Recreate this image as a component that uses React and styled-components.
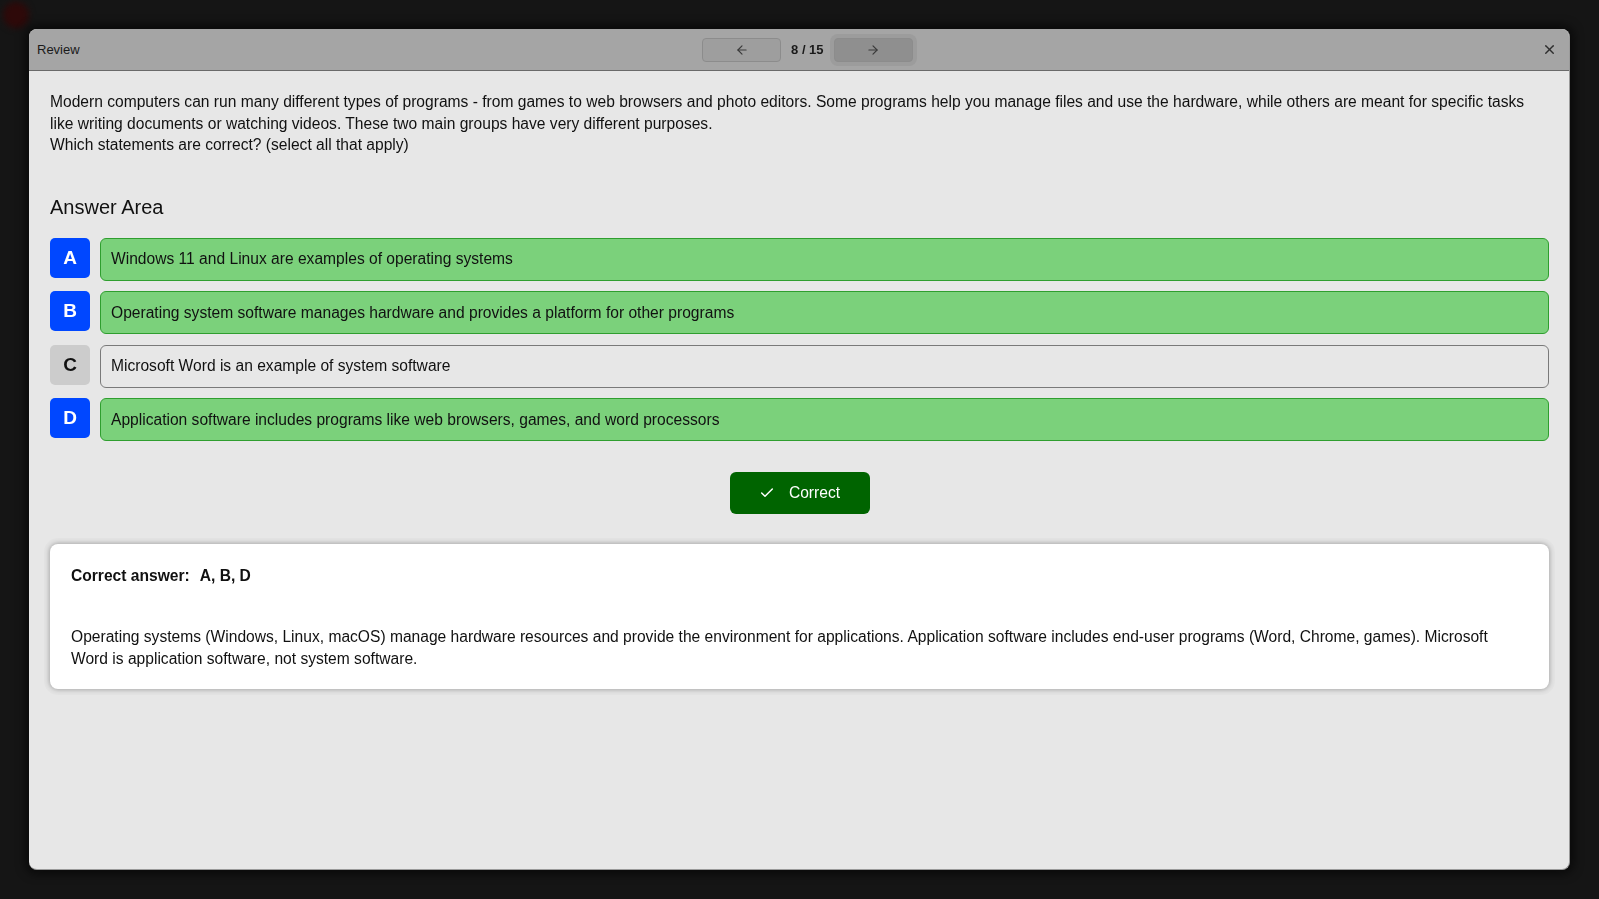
import styled, { createGlobalStyle } from "styled-components"
import { ArrowLeft, ArrowRight, X, Check } from "lucide-react"

const options = [
    { letter: "A", text: "Windows 11 and Linux are examples of operating systems", correct: true },
    { letter: "B", text: "Operating system software manages hardware and provides a platform for other programs", correct: true },
    { letter: "C", text: "Microsoft Word is an example of system software", correct: false },
    { letter: "D", text: "Application software includes programs like web browsers, games, and word processors", correct: true },
]

export default function App() {
    return (
        <>
            <Global />
            <Backdrop>
                <RedDot />
            </Backdrop>
            <Overlay>
                <Modal>
                    <Header>
                        <Title>Review</Title>
                        <Nav>
                            <NavButton>
                                <ArrowLeft size={14} strokeWidth={2} />
                            </NavButton>
                            <Counter>8 / 15</Counter>
                            <NavButton $focused>
                                <ArrowRight size={14} strokeWidth={2} />
                            </NavButton>
                        </Nav>
                        <Close>
                            <X size={15} strokeWidth={2.2} />
                        </Close>
                    </Header>
                    <Body>
                        <Question>
                            Modern computers can run many different types of programs - from games to web browsers and photo editors. Some programs help you manage files and use the hardware, while others are meant for specific tasks like writing documents or watching videos. These two main groups have very different purposes.
                            <br />
                            Which statements are correct? (select all that apply)
                        </Question>
                        <AreaTitle>Answer Area</AreaTitle>
                        <Options>
                            {options.map((o) => (
                                <Option key={o.letter}>
                                    <Letter $selected={o.correct}>{o.letter}</Letter>
                                    <OptionText $selected={o.correct}>{o.text}</OptionText>
                                </Option>
                            ))}
                        </Options>
                        <ResultRow>
                            <ResultButton>
                                <Check size={16} strokeWidth={2.2} />
                                Correct
                            </ResultButton>
                        </ResultRow>
                        <Explanation>
                            <AnswerLine>
                                Correct answer:<Answer>A, B, D</Answer>
                            </AnswerLine>
                            <ExplainText>
                                Operating systems (Windows, Linux, macOS) manage hardware resources and provide the environment for applications. Application software includes end-user programs (Word, Chrome, games). Microsoft Word is application software, not system software.
                            </ExplainText>
                        </Explanation>
                    </Body>
                </Modal>
            </Overlay>
        </>
    )
}

const Global = createGlobalStyle`
    html, body {
        margin: 0;
        height: 100%;
        background: #151515;
        font-family: "Liberation Sans", Arial, sans-serif;
        overflow: hidden;
    }
    * {
        box-sizing: border-box;
    }
`

const Backdrop = styled.div`
    position: fixed;
    inset: 0;
    background: #151515;
`

const RedDot = styled.div`
    position: absolute;
    left: 3px;
    top: 2px;
    width: 26px;
    height: 26px;
    border-radius: 50%;
    background: #2e0909;
    filter: blur(3px);
`

const Overlay = styled.div`
    position: fixed;
    inset: 0;
    padding: 29px;
    display: flex;
`

const Modal = styled.div`
    flex: 1;
    display: flex;
    flex-direction: column;
    background: #e7e7e7;
    border-radius: 8px;
    overflow: hidden;
    border-right: 1px solid #9a9a9a;
    border-bottom: 1px solid #9a9a9a;
    box-shadow: 0 0 10px 4px rgba(0, 0, 0, 0.55);
`

const Header = styled.div`
    height: 42px;
    flex-shrink: 0;
    display: flex;
    justify-content: space-between;
    align-items: center;
    padding: 0 6px 0 8px;
    background: #a5a5a5;
    border-bottom: 1px solid #6a6a6a;
`

const Title = styled.div`
    font-size: 13px;
    color: #1a1a1a;
`

const Nav = styled.div`
    display: flex;
    align-items: center;
    gap: 10px;
`

const NavButton = styled.button`
    width: 79px;
    height: 24px;
    display: flex;
    align-items: center;
    justify-content: center;
    border: 1px solid #8c8c8c;
    border-radius: 4px;
    background: ${(p) => (p.$focused ? "#8f8f8f" : "#9e9e9e")};
    color: #3a3a3a;
    padding: 0;
    box-shadow: ${(p) => (p.$focused ? "0 0 0 4px #9c9c9c" : "none")};
`

const Counter = styled.span`
    font-size: 13px;
    font-weight: 700;
    color: #1a1a1a;
`

const Close = styled.div`
    width: 28px;
    height: 28px;
    display: flex;
    align-items: center;
    justify-content: center;
    color: #2e2e2e;
`

const Body = styled.div`
    flex: 1;
    padding: 20px 20px 20px 21px;
    display: flex;
    flex-direction: column;
`

const Question = styled.div`
    font-size: 15.6px;
    line-height: 21.5px;
    color: #111;
`

const AreaTitle = styled.div`
    margin-top: 39px;
    font-size: 20px;
    line-height: 24px;
    color: #111;
`

const Options = styled.div`
    margin-top: 19px;
    display: flex;
    flex-direction: column;
    gap: 10.6px;
`

const Option = styled.div`
    display: flex;
    align-items: flex-start;
    gap: 10px;
`

const Letter = styled.div`
    width: 40px;
    height: 40px;
    flex-shrink: 0;
    display: flex;
    align-items: center;
    justify-content: center;
    border-radius: 5px;
    font-size: 19px;
    font-weight: 700;
    background: ${(p) => (p.$selected ? "#0047ff" : "#cccccc")};
    color: ${(p) => (p.$selected ? "#ffffff" : "#111111")};
`

const OptionText = styled.div`
    flex: 1;
    height: 43px;
    display: flex;
    align-items: center;
    padding: 0 10px;
    font-size: 15.6px;
    color: #111;
    border-radius: 6px;
    border: 1px solid ${(p) => (p.$selected ? "#2f9e2f" : "#7a7a7a")};
    background: ${(p) => (p.$selected ? "#7bd17b" : "#e7e7e7")};
`

const ResultRow = styled.div`
    margin-top: 31px;
    display: flex;
    justify-content: center;
`

const ResultButton = styled.div`
    width: 140px;
    height: 42px;
    display: flex;
    align-items: center;
    justify-content: center;
    gap: 14px;
    background: #006400;
    color: #fff;
    border-radius: 6px;
    font-size: 15.6px;
`

const Explanation = styled.div`
    margin-top: 30px;
    background: #fff;
    border-radius: 8px;
    padding: 21px 20px 20px 21px;
    box-shadow: 0 0 4px 1px rgba(0, 0, 0, 0.25), 0 0 0 6px rgba(0, 0, 0, 0.02);
`

const AnswerLine = styled.div`
    font-size: 15.6px;
    font-weight: 700;
    line-height: 22px;
    color: #111;
`

const Answer = styled.span`
    margin-left: 10px;
`

const ExplainText = styled.div`
    margin-top: 39px;
    font-size: 15.6px;
    line-height: 21.5px;
    color: #111;
`
